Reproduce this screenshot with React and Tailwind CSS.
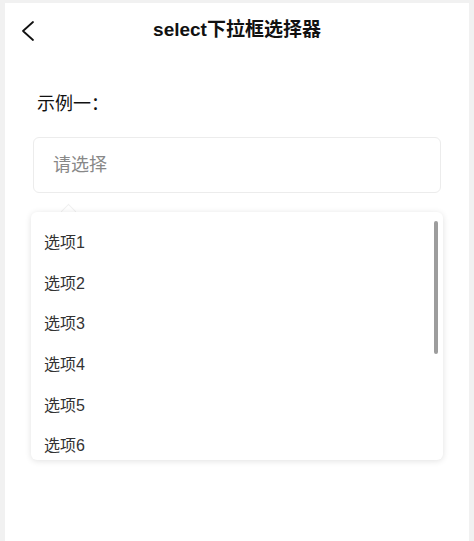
import { useState } from "react";

const options = ["选项1", "选项2", "选项3", "选项4", "选项5", "选项6"];

function App() {
  const [value, setValue] = useState("");
  const [open, setOpen] = useState(true);

  return (
    <div className="h-[541px] bg-[#f1f1f1] pt-[3px] px-[5px] font-['Liberation_Sans','Noto_Sans_CJK_SC',sans-serif]">
      <div className="h-full bg-white">
        {/* 顶部导航 */}
        <div className="grid h-[54px] grid-cols-[1fr_auto_1fr] items-center">
          <button className="justify-self-start pl-[15px] pt-[1px] text-[#111]">
            <svg width="16" height="22" viewBox="0 0 16 22" fill="none">
              <path d="M13 2 L3 11 L13 20" stroke="currentColor" strokeWidth="1.8" strokeLinecap="round" strokeLinejoin="round" />
            </svg>
          </button>
          <div className="mt-[1px] text-[19px] font-bold text-[#111]">select下拉框选择器</div>
          <div />
        </div>

        <div className="flex flex-col px-[28px]">
          <div className="ml-[4px] mt-[34px] text-[18px] leading-[26px] text-[#111]">示例一：</div>

          <div
            onClick={() => setOpen(!open)}
            className="mt-[20px] flex h-[56px] items-center rounded-[6px] border border-[#ececec] px-[19px] text-[18px] text-[#888]"
          >
            {value || "请选择"}
          </div>

          {open && (
            <div className="relative -mx-[2px] mt-[19px]">
              {/* 小三角 */}
              <div className="absolute left-[32px] -top-[6px] h-[11px] w-[11px] rotate-45 border-l border-t border-[#f0f0f0] bg-white" />
              <div className="relative flex h-[248px] flex-col overflow-hidden rounded-[6px] bg-white py-[11px] shadow-[0_1px_6px_rgba(0,0,0,0.12)]">
                {options.map((o) => (
                  <div
                    key={o}
                    onClick={() => { setValue(o); setOpen(false); }}
                    className="flex h-[40.6px] shrink-0 items-center px-[13px] text-[16px] text-[#333]"
                  >
                    {o}
                  </div>
                ))}
                <div className="absolute right-[5px] top-[9px] h-[133px] w-[4px] rounded-full bg-[#9d9d9d]" />
              </div>
            </div>
          )}
        </div>
      </div>
    </div>
  );
}

export default App;
